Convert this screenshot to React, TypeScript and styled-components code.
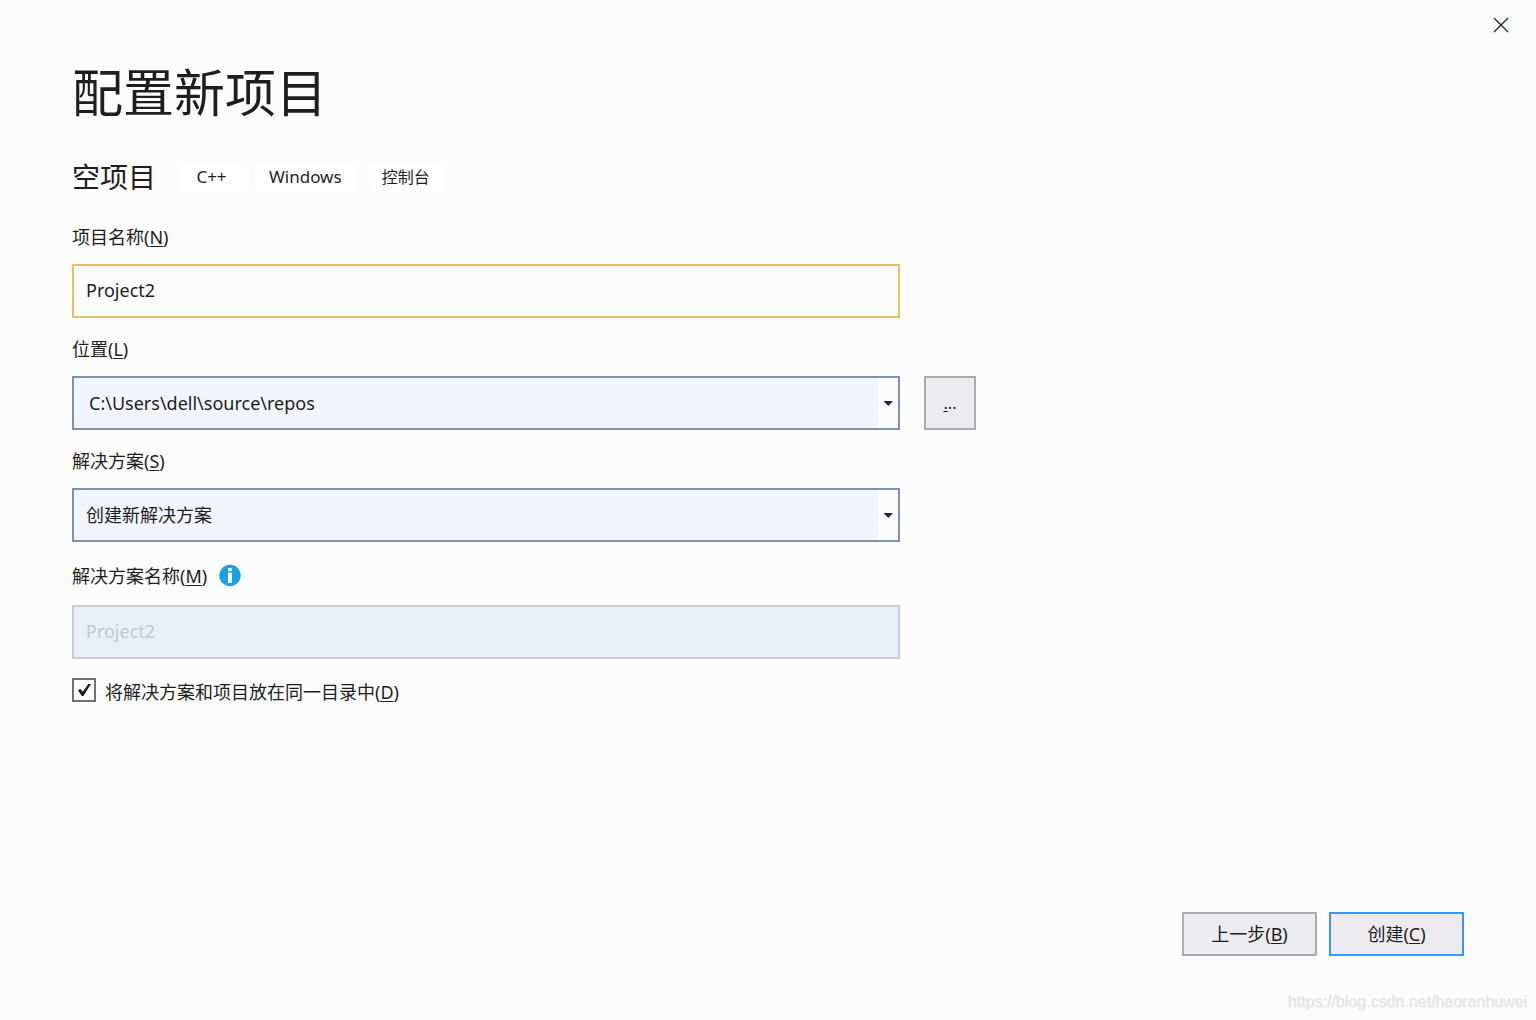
import React, { useState } from "react";
import styled, { createGlobalStyle } from "styled-components";

const GlobalStyle = createGlobalStyle`
  *, *::before, *::after { box-sizing: border-box; }
  body {
    margin: 0;
    background: #fcfcfc;
    color: #1e1e1e;
    font-family: "Noto Sans", "Noto Sans CJK SC", sans-serif;
    font-size: 18px;
    line-height: 24px;
  }
  button, input, select { font: inherit; color: inherit; margin: 0; }
`;

const Dialog = styled.div`
  position: relative;
  display: flex;
  flex-direction: column;
  min-height: 100vh;
  padding: 0 72px 64px;
`;

const TitleBar = styled.header`
  display: flex;
  justify-content: flex-end;
  height: 56px;
  padding-top: 8px;
  margin-right: -54px;
`;

const CloseButton = styled.button`
  display: grid;
  place-items: center;
  width: 34px;
  height: 34px;
  padding: 0;
  border: 0;
  background: transparent;
`;

const Title = styled.h1`
  margin: 0;
  font-size: 51px;
  font-weight: 400;
  line-height: 72px;
`;

const TemplateRow = styled.div`
  display: flex;
  align-items: center;
  flex-wrap: wrap;
  gap: 12px;
  margin: 32px 0 31px;
`;

const TemplateName = styled.h2`
  margin: 0 12px 0 0;
  font-size: 28px;
  font-weight: 400;
  line-height: 34px;
`;

const Tag = styled.span<{ $latin?: boolean }>`
  min-width: 63px;
  padding: 0 14px;
  border-radius: 6px;
  background: #fff;
  font-size: ${(p) => (p.$latin ? 17 : 16)}px;
  line-height: 30px;
  text-align: center;
`;

const Form = styled.form`
  display: flex;
  flex: 1;
  flex-direction: column;
`;

const Fields = styled.div`
  display: flex;
  flex-direction: column;
  gap: 19px;
  max-width: 904px;
`;

const Field = styled.div`
  display: flex;
  flex-direction: column;
  gap: 15px;
`;

const LabelRow = styled.div`
  display: flex;
  align-items: center;
  gap: 12px;
`;

const InfoMark = styled.svg`
  width: 22px;
  height: 29px;
`;

const ControlRow = styled.div`
  display: grid;
  grid-template-columns: minmax(0, 1fr) 52px;
  gap: 24px;
`;

const TextBox = styled.input`
  width: 100%;
  height: 54px;
  padding: 0 12px 2px;
  border: 2px solid #e5c365;
  border-radius: 0;
  outline: 0;
  background: #fcfcfc;

  &:disabled {
    border-color: #c6cbd6;
    background: #eaeef6;
    color: #c6c8cc;
  }
`;

const ComboFrame = styled.div`
  display: grid;
  grid-template-columns: minmax(0, 1fr) 20px;
  height: 54px;
  border: 2px solid #8591a8;
  background: #fcfcfc;
`;

const Combo = styled.select<{ $inset: number }>`
  grid-area: 1 / 1 / 2 / 3;
  width: 100%;
  padding: 0 20px 0 ${(p) => p.$inset}px;
  border: 0;
  border-radius: 0;
  outline: 0;
  appearance: none;
  background: linear-gradient(to left, #fcfcfc 20px, #f2f5fd 20px);
`;

const ComboArrow = styled.svg`
  grid-area: 1 / 2;
  align-self: center;
  justify-self: center;
  width: 10px;
  height: 6px;
  pointer-events: none;
`;

const Button = styled.button<{ $primary?: boolean }>`
  height: 44px;
  min-width: 135px;
  padding: 0 12px;
  border: 2px solid ${(p) => (p.$primary ? "#3399ff" : "#acacac")};
  background: #ececf0;
`;

const BrowseButton = styled(Button)`
  height: 54px;
  min-width: 0;
  padding: 0;
  font-size: 16px;
`;

const CheckLabel = styled.label`
  display: flex;
  align-items: flex-start;
  align-self: flex-start;
  gap: 9px;
`;

const CheckText = styled.span`
  padding-top: 2px;
`;

const CheckFrame = styled.span`
  display: grid;
  width: 24px;
  height: 24px;
`;

const CheckBox = styled.input`
  grid-area: 1 / 1;
  width: 24px;
  height: 24px;
  border: 2px solid #717171;
  appearance: none;
  background: #fefefe;

  &:not(:checked) + svg { visibility: hidden; }
`;

const CheckMark = styled.svg`
  grid-area: 1 / 1;
  pointer-events: none;
`;

const Key = styled.span`
  text-decoration: underline;
  text-decoration-thickness: 1px;
  text-underline-offset: 2px;
`;

const Footer = styled.footer`
  display: flex;
  justify-content: flex-end;
  gap: 12px;
  margin-top: auto;
`;

const Watermark = styled.div`
  position: absolute;
  right: 9px;
  bottom: 6px;
  color: #e4e4e4;
  font-family: "Liberation Sans", sans-serif;
  font-size: 16px;
  text-shadow: 1px 1px 0 #f2f2f2;
`;

function Arrow() {
  return (
    <ComboArrow viewBox="0 0 10 6" aria-hidden="true">
      <path d="M.5 1h9.5L5.3 6z" fill="#1b293e" />
    </ComboArrow>
  );
}

export default function App() {
  const [name, setName] = useState("Project2");
  const [sameFolder, setSameFolder] = useState(true);

  return (
    <Dialog>
      <GlobalStyle />
      <TitleBar>
        <CloseButton type="button" aria-label="关闭">
          <svg width="16" height="16" viewBox="0 0 16 16" aria-hidden="true">
            <path d="M1 1l14 14M15 1L1 15" stroke="#1b293e" strokeWidth="1.4" />
          </svg>
        </CloseButton>
      </TitleBar>
      <Title>配置新项目</Title>
      <TemplateRow>
        <TemplateName>空项目</TemplateName>
        <Tag $latin>C++</Tag>
        <Tag $latin>Windows</Tag>
        <Tag>控制台</Tag>
      </TemplateRow>
      <Form onSubmit={(e) => e.preventDefault()}>
        <Fields>
          <Field>
            <label htmlFor="name">项目名称(<Key>N</Key>)</label>
            <ControlRow>
              <TextBox id="name" value={name} onChange={(e) => setName(e.target.value)} />
            </ControlRow>
          </Field>
          <Field>
            <label htmlFor="location">位置(<Key>L</Key>)</label>
            <ControlRow>
              <ComboFrame>
                <Combo id="location" $inset={15}>
                  <option>C:\Users\dell\source\repos</option>
                </Combo>
                <Arrow />
              </ComboFrame>
              <BrowseButton type="button" aria-label="浏览">
                <Key>.</Key>..
              </BrowseButton>
            </ControlRow>
          </Field>
          <Field>
            <label htmlFor="solution">解决方案(<Key>S</Key>)</label>
            <ControlRow>
              <ComboFrame>
                <Combo id="solution" $inset={12}>
                  <option>创建新解决方案</option>
                </Combo>
                <Arrow />
              </ComboFrame>
            </ControlRow>
          </Field>
          <Field>
            <LabelRow>
              <label htmlFor="solutionName">解决方案名称(<Key>M</Key>)</label>
              <InfoMark viewBox="0 0 22 29" aria-hidden="true">
                <circle cx="11" cy="14.5" r="10.7" fill="#1ba1e2" />
                <path d="M9 7h4v3H9zM9 11.5h4V22H9z" fill="#fff" />
              </InfoMark>
            </LabelRow>
            <ControlRow>
              <TextBox id="solutionName" value={name} disabled={sameFolder} readOnly />
            </ControlRow>
          </Field>
          <CheckLabel>
            <CheckFrame>
              <CheckBox
                type="checkbox"
                checked={sameFolder}
                onChange={(e) => setSameFolder(e.target.checked)}
              />
              <CheckMark width="24" height="24" viewBox="0 0 24 24" aria-hidden="true">
                <path d="M6 12.5l2.2-1.8 2.6 3L16.2 6H19l-7.6 12h-1.6z" fill="#1e1e1e" />
              </CheckMark>
            </CheckFrame>
            <CheckText>将解决方案和项目放在同一目录中(<Key>D</Key>)</CheckText>
          </CheckLabel>
        </Fields>
        <Footer>
          <Button type="button">上一步(<Key>B</Key>)</Button>
          <Button type="submit" $primary>创建(<Key>C</Key>)</Button>
        </Footer>
      </Form>
      <Watermark>https://blog.csdn.net/haoranhuwei</Watermark>
    </Dialog>
  );
}
